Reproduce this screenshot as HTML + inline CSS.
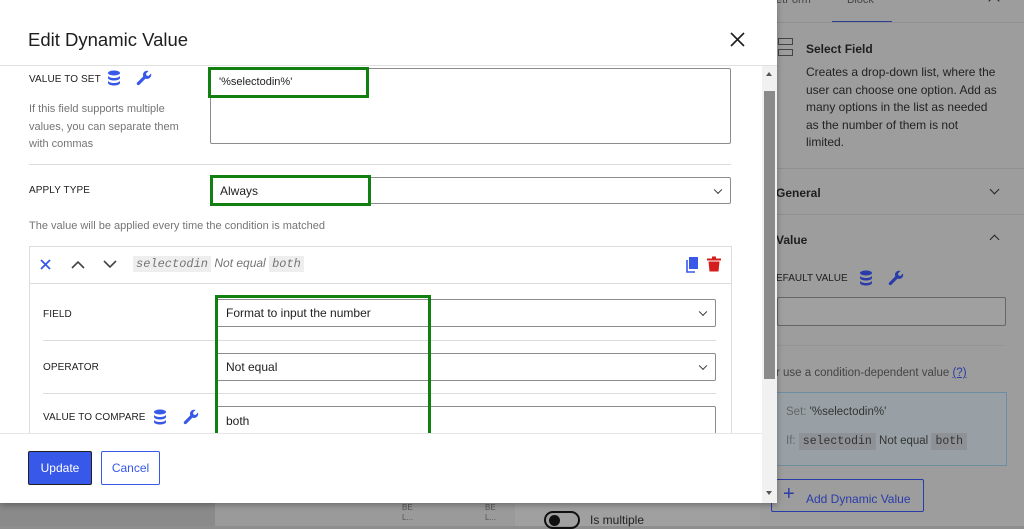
<!DOCTYPE html>
<html><head><meta charset="utf-8"><style>
*{box-sizing:border-box;margin:0;padding:0}
body{width:1024px;height:526px;overflow:hidden;position:relative;background:#8e8e8e;font-family:"Liberation Sans",sans-serif;color:#1e1e1e}
.abs{position:absolute}
.lbl{position:absolute;font-size:10px;color:#1e1e1e;letter-spacing:.1px}
.help{position:absolute;font-size:10.5px;color:#757575;line-height:17.5px}
.inp{position:absolute;border:1px solid #8c8c8c;border-radius:2px;background:#fff;font-size:12px;color:#1e1e1e;padding-left:9px;display:flex;align-items:center}
.chev{position:absolute;right:9px;top:50%;width:6px;height:6px;border-right:1.5px solid #333;border-bottom:1.5px solid #333;transform:translateY(-70%) rotate(45deg)}
.green{position:absolute;border:3px solid #118011}
.hr{position:absolute;height:1px;background:#dcdcdc}
.code{background:#eee;font-family:"Liberation Mono",monospace;font-style:italic;color:#757575;padding:1px 3px}
</style></head><body>
<div class="abs" style="left:777px;top:0;width:247px;height:526px;background:#9d9d9d"></div>
<div class="abs" style="left:760px;top:503px;width:17px;height:23px;background:#9d9d9d"></div>
<div class="abs" style="left:0;top:503px;width:215px;height:23px;background:#8a8a8a"></div>
<div class="abs" style="left:215px;top:503px;width:300px;height:23px;background:#9a9a9a"></div>
<div class="abs" style="left:515px;top:503px;width:245px;height:23px;background:#a0a0a0"></div>
<div class="abs" style="left:402px;top:503px;font-size:8px;color:#555;line-height:10px">BE<br>L...</div>
<div class="abs" style="left:485px;top:503px;font-size:8px;color:#555;line-height:10px">BE<br>L...</div>
<div class="abs" style="left:544px;top:511px;width:36px;height:18px;border:2px solid #111;border-radius:9px"><div style="position:absolute;left:3px;top:2px;width:11px;height:11px;border-radius:50%;background:#111"></div></div>
<div class="abs" style="left:590px;top:513px;font-size:12px;color:#222">Is multiple</div>

<div class="abs" style="left:776px;top:-6px;font-size:11px;color:#444">etForm</div>
<div class="abs" style="left:847px;top:-6px;font-size:11px;color:#444">Block</div>
<div class="abs" style="left:832px;top:21px;width:60px;height:2px;background:#2c3e90"></div>
<div class="abs" style="left:990px;top:-3px;width:8px;height:8px;border-left:1.5px solid #222;border-top:1.5px solid #222;transform:rotate(45deg)"></div>
<div class="abs" style="left:777px;top:22px;width:247px;height:1px;background:#909090"></div>
<div class="abs" style="left:778px;top:38px;width:15px;height:7px;border:1px solid #444"></div>
<div class="abs" style="left:778px;top:49px;width:15px;height:7px;border:1px solid #444"></div>
<div class="abs" style="left:806px;top:42px;font-size:12px;font-weight:bold;color:#1e1e1e">Select Field</div>
<div class="abs" style="left:806px;top:64px;width:192px;font-size:12px;line-height:17.5px;color:#222">Creates a drop-down list, where the user can choose one option. Add as many options in the list as needed as the number of them is not limited.</div>
<div class="abs" style="left:777px;top:168px;width:247px;height:1px;background:#909090"></div>
<div class="abs" style="left:776px;top:186px;font-size:12px;font-weight:bold;color:#1e1e1e">General</div>
<div class="abs" style="left:991px;top:186px;width:7px;height:7px;border-right:1.5px solid #222;border-bottom:1.5px solid #222;transform:rotate(45deg)"></div>
<div class="abs" style="left:777px;top:214px;width:247px;height:1px;background:#909090"></div>
<div class="abs" style="left:776px;top:233px;font-size:12px;font-weight:bold;color:#1e1e1e">Value</div>
<div class="abs" style="left:991px;top:236px;width:7px;height:7px;border-left:1.5px solid #222;border-top:1.5px solid #222;transform:rotate(45deg)"></div>
<div class="abs" style="left:776px;top:273px;font-size:10px;color:#1e1e1e">EFAULT VALUE</div>
<svg class="abs" style="left:859px;top:270px" width="14" height="16" viewBox="0 0 14 16"><g fill="#2a3ca8"><ellipse cx="7" cy="3" rx="6" ry="2.5"/><path d="M1 5.5c0 1.4 2.7 2.5 6 2.5s6-1.1 6-2.5V8c0 1.4-2.7 2.5-6 2.5S1 9.4 1 8z"/><path d="M1 10.5c0 1.4 2.7 2.5 6 2.5s6-1.1 6-2.5V13c0 1.4-2.7 2.5-6 2.5S1 14.4 1 13z"/></g></svg>
<svg class="abs" style="left:888px;top:270px" width="16" height="16" viewBox="0 0 16 16"><path fill="#2a3ca8" d="M15 3.5l-2.5 2.5-2-.5-.5-2L12.5 1C10.7.4 8.6 1 7.6 2.6 6.8 3.8 6.8 5.2 7.3 6.4L1.2 12.5c-.6.6-.6 1.6 0 2.2s1.6.6 2.2 0l6.1-6.1c1.2.5 2.6.5 3.8-.3C14.9 7.3 15.6 5.3 15 3.5z"/></svg>
<div class="abs" style="left:777px;top:297px;width:229px;height:29px;border:1px solid #666;background:#a0a0a0;border-radius:2px"></div>
<div class="abs" style="left:777px;top:345px;width:229px;height:1px;background:#959595"></div>
<div class="abs" style="left:776px;top:367px;font-size:11.5px;color:#444">r use a condition-dependent value <span style="color:#2a3ca8;text-decoration:underline">(?)</span></div>
<div class="abs" style="left:776px;top:392px;width:231px;height:74px;border:1px solid #6f8da0;background:#98a0a5"></div>
<div class="abs" style="left:786px;top:406px;font-size:11.5px;color:#333"><span style="color:#666">Set:</span> '%selectodin%'</div>
<div class="abs" style="left:786px;top:435px;font-size:11.5px;color:#333"><span style="color:#666">If:</span> <span style="background:#8e9296;font-family:'Liberation Mono',monospace;padding:2px 4px">selectodin</span> Not equal <span style="background:#8e9296;font-family:'Liberation Mono',monospace;padding:2px 4px">both</span></div>
<div class="abs" style="left:771px;top:479px;width:153px;height:33px;border:1px solid #2a3ca8;border-radius:2px"></div>
<div class="abs" style="left:783px;top:484px;font-size:20px;color:#2a3ca8;line-height:20px">+</div>
<div class="abs" style="left:806px;top:492px;font-size:12px;color:#2a3ca8">Add Dynamic Value</div>

<div class="abs" style="left:0;top:0;width:777px;height:503px;background:#fff;box-shadow:0 2px 6px rgba(0,0,0,.3)">
<div class="abs" style="left:28px;top:29px;font-size:18.5px;color:#1e1e1e">Edit Dynamic Value</div>
<svg class="abs" style="left:729px;top:31px" width="17" height="17" viewBox="0 0 17 17"><path d="M2 2L15 15M15 2L2 15" stroke="#1e1e1e" stroke-width="1.6"/></svg>
<div class="abs" style="left:0;top:65px;width:777px;height:1px;background:#e0e0e0"></div>
<div class="abs" style="left:762px;top:66px;width:15px;height:437px;background:#f1f1f1"></div>
<div class="abs" style="left:764px;top:91px;width:11px;height:288px;background:#8a8a8a"></div>
<div class="abs" style="left:766px;top:72px;width:0;height:0;border-left:3px solid transparent;border-right:3px solid transparent;border-bottom:4px solid #555"></div>
<div class="abs" style="left:766px;top:491px;width:0;height:0;border-left:3px solid transparent;border-right:3px solid transparent;border-top:4px solid #555"></div>

<div class="abs" style="left:0;top:66px;width:762px;height:367px;overflow:hidden">
 <div class="lbl" style="left:29px;top:8px">VALUE TO SET</div>
 <svg class="abs" style="left:107px;top:4px" width="14" height="16" viewBox="0 0 14 16"><g fill="#3858e9"><ellipse cx="7" cy="3" rx="6" ry="2.5"/><path d="M1 5.5c0 1.4 2.7 2.5 6 2.5s6-1.1 6-2.5V8c0 1.4-2.7 2.5-6 2.5S1 9.4 1 8z"/><path d="M1 10.5c0 1.4 2.7 2.5 6 2.5s6-1.1 6-2.5V13c0 1.4-2.7 2.5-6 2.5S1 14.4 1 13z"/></g></svg>
 <svg class="abs" style="left:136px;top:4px" width="16" height="16" viewBox="0 0 16 16"><path fill="#3858e9" d="M15 3.5l-2.5 2.5-2-.5-.5-2L12.5 1C10.7.4 8.6 1 7.6 2.6 6.8 3.8 6.8 5.2 7.3 6.4L1.2 12.5c-.6.6-.6 1.6 0 2.2s1.6.6 2.2 0l6.1-6.1c1.2.5 2.6.5 3.8-.3C14.9 7.3 15.6 5.3 15 3.5z"/></svg>
 <div class="help" style="left:29px;top:35px;width:165px;font-size:11px">If this field supports multiple values, you can separate them with commas</div>
 <div class="abs" style="left:210px;top:2px;width:521px;height:76px;border:1px solid #8c8c8c;border-radius:2px"></div>
 <div class="abs" style="left:219px;top:10px;font-size:11px;color:#1e1e1e">'%selectodin%'</div>
 <div class="green" style="left:208px;top:1px;width:161px;height:31px"></div>
 <div class="hr" style="left:29px;top:98px;width:702px"></div>
 <div class="lbl" style="left:29px;top:119px">APPLY TYPE</div>
 <div class="inp" style="left:210px;top:111px;width:521px;height:27px">Always<span class="chev"></span></div>
 <div class="green" style="left:210px;top:109px;width:161px;height:31px"></div>
 <div class="help" style="left:29px;top:152px;font-size:11px">The value will be applied every time the condition is matched</div>
 <div class="abs" style="left:29px;top:180px;width:703px;height:200px;border:1px solid #dcdcdc"></div>
 <svg class="abs" style="left:40px;top:193px" width="11" height="11" viewBox="0 0 11 11"><path d="M1 1L10 10M10 1L1 10" stroke="#3858e9" stroke-width="1.8"/></svg>
 <svg class="abs" style="left:71px;top:194px" width="14" height="9" viewBox="0 0 14 9"><path d="M1 8L7 2L13 8" stroke="#444" stroke-width="1.6" fill="none"/></svg>
 <svg class="abs" style="left:103px;top:194px" width="14" height="9" viewBox="0 0 14 9"><path d="M1 1L7 7L13 1" stroke="#444" stroke-width="1.6" fill="none"/></svg>
 <div class="abs" style="left:133px;top:190px;font-size:12px;color:#757575;font-style:italic"><span class="code">selectodin</span> Not equal <span class="code">both</span></div>
 <svg class="abs" style="left:685px;top:191px" width="14" height="16" viewBox="0 0 14 16"><rect x="4" y="0" width="9" height="12" fill="#3858e9"/><path d="M2 3v12h8" stroke="#3858e9" stroke-width="1.6" fill="none"/></svg>
 <svg class="abs" style="left:707px;top:190px" width="14" height="16" viewBox="0 0 14 16"><rect x="0" y="2.5" width="14" height="2" fill="#d41e1e"/><rect x="5" y="0.5" width="4" height="2" fill="#d41e1e"/><path d="M1.5 5.5h11l-1 10h-9z" fill="#d41e1e"/></svg>
 <div class="hr" style="left:30px;top:217px;width:701px"></div>
 <div class="lbl" style="left:43px;top:243px">FIELD</div>
 <div class="inp" style="left:216px;top:233px;width:500px;height:28px">Format to input the number<span class="chev"></span></div>
 <div class="hr" style="left:43px;top:274px;width:673px"></div>
 <div class="lbl" style="left:43px;top:296px">OPERATOR</div>
 <div class="inp" style="left:216px;top:287px;width:500px;height:28px">Not equal<span class="chev"></span></div>
 <div class="hr" style="left:43px;top:327px;width:673px"></div>
 <div class="lbl" style="left:43px;top:346px">VALUE TO COMPARE</div>
 <svg class="abs" style="left:153px;top:343px" width="14" height="16" viewBox="0 0 14 16"><g fill="#3858e9"><ellipse cx="7" cy="3" rx="6" ry="2.5"/><path d="M1 5.5c0 1.4 2.7 2.5 6 2.5s6-1.1 6-2.5V8c0 1.4-2.7 2.5-6 2.5S1 9.4 1 8z"/><path d="M1 10.5c0 1.4 2.7 2.5 6 2.5s6-1.1 6-2.5V13c0 1.4-2.7 2.5-6 2.5S1 14.4 1 13z"/></g></svg>
 <svg class="abs" style="left:183px;top:343px" width="16" height="16" viewBox="0 0 16 16"><path fill="#3858e9" d="M15 3.5l-2.5 2.5-2-.5-.5-2L12.5 1C10.7.4 8.6 1 7.6 2.6 6.8 3.8 6.8 5.2 7.3 6.4L1.2 12.5c-.6.6-.6 1.6 0 2.2s1.6.6 2.2 0l6.1-6.1c1.2.5 2.6.5 3.8-.3C14.9 7.3 15.6 5.3 15 3.5z"/></svg>
 <div class="inp" style="left:216px;top:340px;width:500px;height:30px">both</div>
 <div class="green" style="left:215px;top:229px;width:216px;height:142px"></div>
</div>
<div class="abs" style="left:0;top:433px;width:762px;height:1px;background:#e6e6e6"></div>
<div class="abs" style="left:28px;top:451px;width:64px;height:34px;background:#3858e9;border:1px solid #1e1e1e;border-radius:2px;color:#fff;font-size:12px;display:flex;align-items:center;justify-content:center">Update</div>
<div class="abs" style="left:101px;top:451px;width:59px;height:34px;border:1px solid #3858e9;border-radius:2px;color:#3858e9;font-size:12px;display:flex;align-items:center;justify-content:center">Cancel</div>
</div>
</body></html>
